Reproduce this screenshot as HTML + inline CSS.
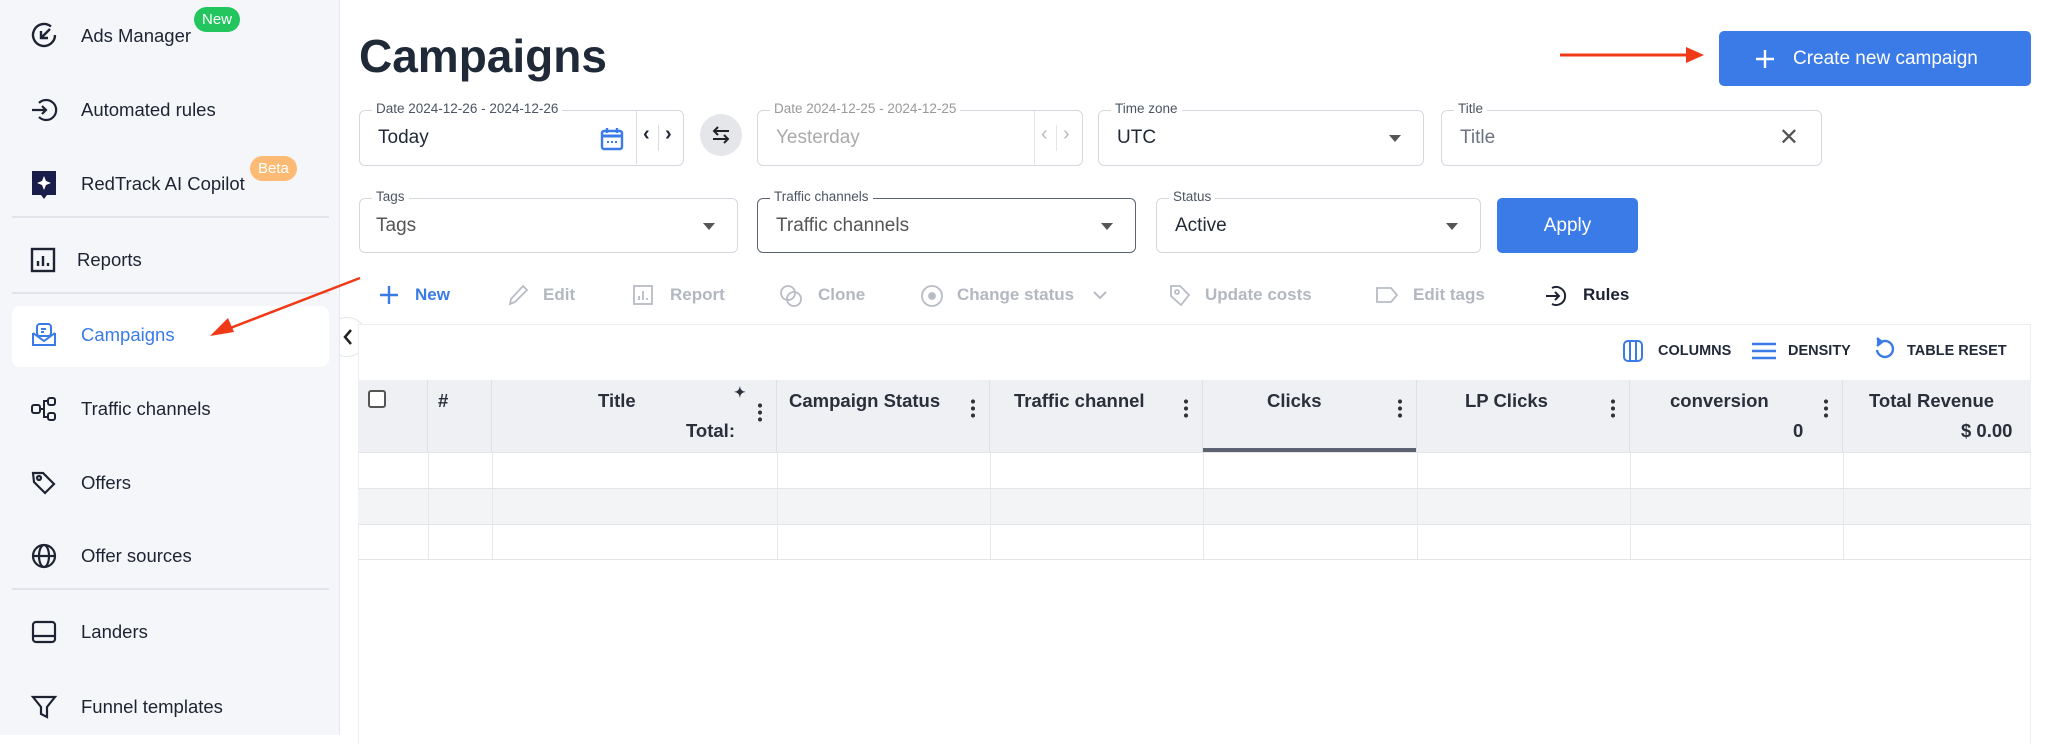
<!DOCTYPE html>
<html><head><meta charset="utf-8"><style>
*{box-sizing:border-box;margin:0;padding:0}
body{width:2048px;height:735px;overflow:hidden;background:#fff;font-family:"Liberation Sans",sans-serif;color:#1f2937;position:relative}
.a{position:absolute}
#side{left:0;top:0;width:340px;height:735px;background:#f5f6f9;border-right:1px solid #e3e6ea}
.ni{position:absolute;left:81px;font-size:18.5px;color:#1e2333;transform:translateY(-50%)}
.ic{position:absolute;left:30px;transform:translateY(-50%)}
.div{position:absolute;left:12px;width:317px;height:2px;background:#e1e4ea}
.badge{position:absolute;border-radius:14px;color:#fff;font-size:15px;padding:4px 8px}
.fld{position:absolute;border:1.5px solid #d5d8de;border-radius:6px;background:#fff}
.lbl{position:absolute;top:-10px;left:12px;background:#fff;padding:0 4px;font-size:13.5px;color:#4b5563}
.val{position:absolute;left:18px;top:50%;transform:translateY(-50%);font-size:19px;color:#1f2937}
.tri{position:absolute;right:22px;top:50%;margin-top:-3px;border-left:6px solid transparent;border-right:6px solid transparent;border-top:7px solid #555}
.tb{position:absolute;top:295px;transform:translateY(-50%);font-size:17px;color:#b3b8c0;font-weight:bold}
.th{position:absolute;top:380px;height:72px;background:#eef0f4;border-right:1px solid #dde0e5;font-size:18.5px;font-weight:bold;color:#2a2f3a}
.th span{position:absolute;top:10px}
.dots{position:absolute;right:14px;top:18px;width:4px;height:20px;background:radial-gradient(circle,#333 2px,transparent 2.2px) 0 0/4px 7px repeat-y}
.vl{position:absolute;top:452px;height:107px;width:1px;background:#e6e8ec}
</style></head><body>
<div id="side" class="a">
 <svg class="ic" style="top:35px" width="28" height="28" viewBox="0 0 28 28" fill="none" stroke="#1e2333" stroke-width="2.4"><path d="M21 5.5A11 11 0 1 0 25 14"/><path d="M20 8 11 17M11 10v7h7"/></svg>
 <div class="ni" style="top:36px">Ads Manager</div>
 <div class="badge" style="left:194px;top:7px;background:#22c55e">New</div>
 <svg class="ic" style="top:110px" width="28" height="28" viewBox="0 0 28 28" fill="none" stroke="#1e2333" stroke-width="2.2"><path d="M9 7A10 10 0 1 1 9 21"/><path d="M2 14h14M12 10l4 4-4 4"/></svg>
 <div class="ni" style="top:110px">Automated rules</div>
 <svg class="ic" style="top:185px" width="28" height="32" viewBox="0 0 28 32"><path d="M2 2h24v24h-9l-3 4-3-4H2z" fill="#1a1d4a"/><path d="M14 7l2 5 5 2-5 2-2 5-2-5-5-2 5-2z" fill="#fff"/></svg>
 <div class="ni" style="top:184px">RedTrack AI Copilot</div>
 <div class="badge" style="left:250px;top:156px;background:#fdba74">Beta</div>
 <div class="div" style="top:216px"></div>
 <svg class="ic" style="top:260px" width="26" height="26" viewBox="0 0 26 26" fill="none" stroke="#1e2333" stroke-width="2.4"><rect x="2" y="2" width="22" height="22"/><path d="M8 19v-5M13 19V9M18 19v-3"/></svg>
 <div class="ni" style="left:77px;top:260px">Reports</div>
 <div class="div" style="top:292px"></div>
 <div class="a" style="left:12px;top:306px;width:317px;height:61px;background:#fff;border-radius:8px"></div>
 <svg class="ic" style="top:335px" width="28" height="28" viewBox="0 0 28 28" fill="none" stroke="#3b7be8" stroke-width="2"><path d="M3 12v12h22V12M3 12l11 8 11-8"/><rect x="7" y="3" width="14" height="12" rx="3"/><path d="M11 8h5M11 11h3"/></svg>
 <div class="ni" style="top:335px;color:#3b7be8">Campaigns</div>
 <svg class="ic" style="top:409px" width="28" height="28" viewBox="0 0 28 28" fill="none" stroke="#1e2333" stroke-width="2"><rect x="2" y="10" width="8" height="8" rx="2"/><rect x="18" y="3" width="7" height="7" rx="2"/><rect x="18" y="18" width="7" height="7" rx="2"/><path d="M10 14h4v-8h4M14 14v8h4"/></svg>
 <div class="ni" style="top:409px">Traffic channels</div>
 <svg class="ic" style="top:483px" width="28" height="28" viewBox="0 0 28 28" fill="none" stroke="#1e2333" stroke-width="2.2"><path d="M3 4h10l11 11-9 9L4 13z"/><circle cx="9" cy="9" r="2"/></svg>
 <div class="ni" style="top:483px">Offers</div>
 <svg class="ic" style="top:556px" width="28" height="28" viewBox="0 0 28 28" fill="none" stroke="#1e2333" stroke-width="2.2"><circle cx="14" cy="14" r="11"/><ellipse cx="14" cy="14" rx="5" ry="11"/><path d="M3 14h22"/></svg>
 <div class="ni" style="top:556px">Offer sources</div>
 <div class="div" style="top:588px"></div>
 <svg class="ic" style="top:632px" width="28" height="28" viewBox="0 0 28 28" fill="none" stroke="#1e2333" stroke-width="2.2"><rect x="3" y="4" width="22" height="20" rx="3"/><path d="M3 18h22"/></svg>
 <div class="ni" style="top:632px">Landers</div>
 <svg class="ic" style="top:707px" width="28" height="28" viewBox="0 0 28 28" fill="none" stroke="#1e2333" stroke-width="2.2"><path d="M3 4h22l-8 10v10l-6-3v-7z"/></svg>
 <div class="ni" style="top:707px">Funnel templates</div>
</div>
<div class="a" style="left:327px;top:317px;width:40px;height:40px;border-radius:50%;background:#fff;border:1px solid #e3e6ea;clip-path:inset(0 0 0 13px)"></div>
<svg class="a" style="left:342px;top:328px" width="12" height="18" viewBox="0 0 12 18" fill="none" stroke="#222" stroke-width="2.5"><path d="M9 2 3 9l6 7"/></svg>
<svg class="a" style="left:200px;top:270px" width="170" height="70" viewBox="0 0 170 70"><path d="M160 8 20 62" stroke="#f03a17" stroke-width="2.5"/><path d="M10 66l18-18 6 14z" fill="#f03a17"/></svg>
<div class="a" style="left:359px;top:29px;font-size:46px;font-weight:bold;color:#1f2937">Campaigns</div>
<svg class="a" style="left:1558px;top:45px" width="150" height="20"><path d="M2 10h128" stroke="#f03a17" stroke-width="3"/><path d="M128 2l18 8-18 8z" fill="#f03a17"/></svg>
<div class="a" style="left:1719px;top:31px;width:312px;height:55px;background:#3b7be8;border-radius:5px;color:#fff;font-size:19px;line-height:55px;padding-left:74px">Create new campaign</div>
<svg class="a" style="left:1754px;top:48px" width="22" height="22" stroke="#fff" stroke-width="2.4"><path d="M11 2v18M2 11h18"/></svg>
<div class="fld" style="left:359px;top:110px;width:325px;height:56px"><div class="lbl">Date 2024-12-26 - 2024-12-26</div><div class="val">Today</div>
 <svg class="a" style="left:240px;top:16px" width="24" height="24" viewBox="0 0 24 24"><rect x="2" y="4" width="20" height="18" rx="2" fill="none" stroke="#3b7be8" stroke-width="2.4"/><path d="M2 9h20" stroke="#3b7be8" stroke-width="3"/><path d="M7 1v5M17 1v5" stroke="#3b7be8" stroke-width="2.4"/><path d="M7 15h2M11 15h2M15 15h2" stroke="#3b7be8" stroke-width="2"/></svg>
 <div class="a" style="left:276px;top:0;width:1px;height:53px;background:#ddd"></div><div class="a" style="left:298px;top:14px;width:1px;height:26px;background:#ddd"></div>
 <div class="a" style="left:283px;top:12px;font-size:20px;font-weight:bold">‹</div><div class="a" style="left:305px;top:12px;font-size:20px;font-weight:bold">›</div></div>
<div class="a" style="left:700px;top:114px;width:42px;height:42px;border-radius:50%;background:#e4e6ea"></div>
<svg class="a" style="left:709px;top:123px" width="24" height="24" fill="none" stroke="#222" stroke-width="2"><path d="M20 8H5M9 4 5 8l4 4M4 16h15M15 12l4 4-4 4"/></svg>
<div class="fld" style="left:757px;top:110px;width:326px;height:56px"><div class="lbl" style="color:#999">Date 2024-12-25 - 2024-12-25</div><div class="val" style="color:#aaa">Yesterday</div>
 <div class="a" style="left:276px;top:0;width:1px;height:53px;background:#e5e5e5"></div><div class="a" style="left:298px;top:14px;width:1px;height:26px;background:#e5e5e5"></div>
 <div class="a" style="left:283px;top:12px;font-size:20px;color:#bbb">‹</div><div class="a" style="left:305px;top:12px;font-size:20px;color:#bbb">›</div></div>
<div class="fld" style="left:1098px;top:110px;width:326px;height:56px"><div class="lbl">Time zone</div><div class="val">UTC</div><div class="tri"></div></div>
<div class="fld" style="left:1441px;top:110px;width:381px;height:56px"><div class="lbl">Title</div><div class="val" style="color:#6b7280">Title</div><div class="a" style="right:22px;top:12px;font-size:24px;color:#555">✕</div></div>
<div class="fld" style="left:359px;top:198px;width:379px;height:55px"><div class="lbl">Tags</div><div class="val" style="color:#555;left:16px">Tags</div><div class="tri"></div></div>
<div class="fld" style="left:757px;top:198px;width:379px;height:55px;border-color:#5b6270"><div class="lbl">Traffic channels</div><div class="val" style="color:#555">Traffic channels</div><div class="tri"></div></div>
<div class="fld" style="left:1156px;top:198px;width:325px;height:55px"><div class="lbl">Status</div><div class="val">Active</div><div class="tri"></div></div>
<div class="a" style="left:1497px;top:198px;width:141px;height:55px;background:#3b7be8;border-radius:5px;color:#fff;font-size:19px;line-height:55px;text-align:center">Apply</div>
<svg class="a" style="left:379px;top:285px" width="20" height="20" stroke="#3b7be8" stroke-width="2.4"><path d="M10 1v18M1 10h18"/></svg>
<div class="tb" style="left:415px;color:#3b7be8">New</div>
<svg class="a" style="left:507px;top:284px" width="22" height="22" fill="none" stroke="#b8bcc4" stroke-width="1.8"><path d="M16 2l4 4L8 18l-5 2 1-5z"/></svg><div class="tb" style="left:543px">Edit</div>
<svg class="a" style="left:632px;top:284px" width="22" height="22" fill="none" stroke="#b8bcc4" stroke-width="1.8"><rect x="2" y="2" width="18" height="18"/><path d="M7 16v-4M11 16V7M15 16v-2"/></svg><div class="tb" style="left:670px">Report</div>
<svg class="a" style="left:778px;top:283px" width="26" height="26" fill="none" stroke="#b8bcc4" stroke-width="1.8"><circle cx="10" cy="10" r="7"/><circle cx="16" cy="16" r="7"/></svg><div class="tb" style="left:818px">Clone</div>
<svg class="a" style="left:920px;top:284px" width="24" height="24" fill="none" stroke="#b8bcc4" stroke-width="1.8"><circle cx="12" cy="12" r="10"/><circle cx="12" cy="12" r="3" fill="#b8bcc4"/></svg><div class="tb" style="left:957px">Change status</div>
<svg class="a" style="left:1092px;top:290px" width="16" height="10" fill="none" stroke="#b8bcc4" stroke-width="2"><path d="M2 2l6 6 6-6"/></svg>
<svg class="a" style="left:1168px;top:283px" width="24" height="26" fill="none" stroke="#b8bcc4" stroke-width="1.8"><path d="M3 3h9l9 9-8 10-10-9z"/><circle cx="9" cy="9" r="2"/></svg><div class="tb" style="left:1205px">Update costs</div>
<svg class="a" style="left:1375px;top:286px" width="24" height="18" fill="none" stroke="#b8bcc4" stroke-width="1.8"><path d="M2 2h14l6 7-6 7H2z"/></svg><div class="tb" style="left:1413px">Edit tags</div>
<svg class="a" style="left:1544px;top:283px" width="26" height="26" fill="none" stroke="#1e2333" stroke-width="2"><path d="M8 5A9 9 0 1 1 8 21"/><path d="M2 13h13M11 9l4 4-4 4"/></svg><div class="tb" style="left:1583px;color:#1e2333">Rules</div>
<div class="a" style="left:358px;top:324px;width:1673px;height:420px;border:1.5px solid #eceef1;border-bottom:none;background:#fff"></div>
<svg class="a" style="left:1622px;top:339px" width="22" height="24" fill="none" stroke="#3b7be8" stroke-width="2"><rect x="2" y="2" width="18" height="20" rx="4"/><path d="M8 2v20M14 2v20"/></svg>
<div class="a" style="left:1658px;top:343px;font-size:14.5px;font-weight:bold;color:#1f2937">COLUMNS</div>
<svg class="a" style="left:1751px;top:341px" width="26" height="20" stroke="#3b7be8" stroke-width="2.5"><path d="M1 3h24M1 10h24M1 17h24"/></svg>
<div class="a" style="left:1788px;top:343px;font-size:14.5px;font-weight:bold;color:#1f2937">DENSITY</div>
<svg class="a" style="left:1873px;top:336px" width="22" height="28" fill="none" stroke="#3b7be8" stroke-width="2.4"><path d="M8 6a8 8 0 1 1-4 8"/><path d="M4 2l5 4-5 4" fill="#3b7be8"/></svg>
<div class="a" style="left:1907px;top:343px;font-size:14.5px;font-weight:bold;color:#1f2937">TABLE RESET</div>
<div class="th" style="left:358px;width:70px"><div class="a" style="left:10px;top:10px;width:18px;height:18px;border:2px solid #555;border-radius:3px;background:#fff"></div></div>
<div class="th" style="left:428px;width:64px"><span style="left:10px">#</span></div>
<div class="th" style="left:492px;width:285px"><span style="left:106px">Title</span><span style="left:194px;top:40px">Total:</span><span style="left:242px;top:4px;font-size:14px">✦</span><div class="dots" style="top:22px;right:14px"></div></div>
<div class="th" style="left:777px;width:213px"><span style="left:12px">Campaign Status</span><div class="dots"></div></div>
<div class="th" style="left:990px;width:213px"><span style="left:24px">Traffic channel</span><div class="dots"></div></div>
<div class="th" style="left:1203px;width:214px"><span style="left:64px">Clicks</span><div class="dots"></div><div class="a" style="left:0;bottom:0;width:213px;height:4px;background:#5c6270"></div></div>
<div class="th" style="left:1417px;width:213px"><span style="left:48px">LP Clicks</span><div class="dots"></div></div>
<div class="th" style="left:1630px;width:213px"><span style="left:40px">conversion</span><span style="left:163px;top:40px">0</span><div class="dots"></div></div>
<div class="th" style="left:1843px;width:188px;border-right:none"><span style="left:26px">Total Revenue</span><span style="left:118px;top:40px">$ 0.00</span></div>
<div class="a" style="left:358px;top:488px;width:1673px;height:36px;background:#f3f4f6"></div>
<div class="a" style="left:358px;top:452px;width:1673px;height:1px;background:#e3e5e9"></div>
<div class="a" style="left:358px;top:488px;width:1673px;height:1px;background:#e3e5e9"></div>
<div class="a" style="left:358px;top:524px;width:1673px;height:1px;background:#e3e5e9"></div>
<div class="a" style="left:358px;top:559px;width:1673px;height:1px;background:#e3e5e9"></div>
<div class="vl" style="left:428px"></div><div class="vl" style="left:492px"></div><div class="vl" style="left:777px"></div><div class="vl" style="left:990px"></div><div class="vl" style="left:1203px"></div><div class="vl" style="left:1417px"></div><div class="vl" style="left:1630px"></div><div class="vl" style="left:1843px"></div>
</body></html>
